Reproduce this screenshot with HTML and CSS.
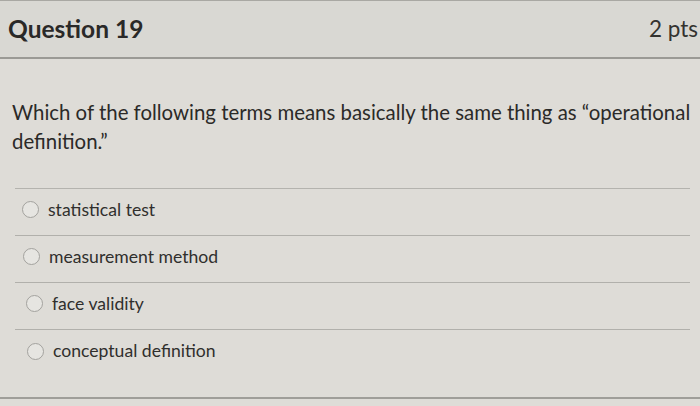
FILE: index.html
```html
<!DOCTYPE html>
<html lang="en">
<head>
<meta charset="utf-8">
<title>Question 19</title>
<link rel="stylesheet" href="styles.css">
</head>
<body>
<div class="quiz">
  <div class="header">
    <h2 class="title">Question 19</h2>
    <span class="points">2 pts</span>
  </div>
  <div class="content">
    <p class="question-text">Which of the following terms means basically the same thing as “operational<br>definition.”</p>
    <div class="answers">
      <label class="answer a1"><span class="radio"></span><span class="label">statistical test</span></label>
      <label class="answer a2"><span class="radio"></span><span class="label">measurement method</span></label>
      <label class="answer a3"><span class="radio"></span><span class="label">face validity</span></label>
      <label class="answer a4"><span class="radio"></span><span class="label">conceptual definition</span></label>
    </div>
  </div>
  <div class="footer"></div>
</div>
</body>
</html>
```
FILE: styles.css
```css
html, body {
  margin: 0;
  padding: 0;
}
body {
  width: 700px;
  height: 406px;
  overflow: hidden;
  background: #dedcd7;
  font-family: Lato, "Open Sans", sans-serif;
  color: #2e2d2b;
}
.quiz {
  display: flex;
  flex-direction: column;
}
.header {
  height: 56px;
  border-top: 1px solid #a9a8a3;
  border-bottom: 2px solid #9b9a95;
  background: #d9d8d3;
  display: flex;
  align-items: center;
  justify-content: space-between;
  padding: 0 2px 0 8px;
}
.title {
  margin: 0 0 2px 0;
  font-size: 24.5px;
  font-weight: 700;
  color: #2a2928;
}
.points {
  font-size: 22.5px;
  font-weight: 400;
  color: #33322f;
  margin-bottom: 2px;
}
.content {
  padding: 0 10px 0 12px;
}
.question-text {
  margin: 39px -8px 0 0;
  font-size: 20.4px;
  line-height: 29px;
  color: #2b2a28;
}
.answers {
  margin: 32px 0 0 3px;
  border-top: 1px solid #b4b3ae;
  display: flex;
  flex-direction: column;
}
.answer {
  box-sizing: border-box;
  height: 47px;
  padding-bottom: 5px;
  border-bottom: 1px solid #b1b0ab;
  display: flex;
  align-items: center;
  gap: 9px;
  padding-left: 7px;
  font-size: 17.6px;
  color: #302f2d;
}
.a2 { padding-left: 8px; }
.a3 { padding-left: 11px; }
.a4 { padding-left: 12px; border-bottom: none; }
.radio {
  width: 15px;
  height: 15px;
  border-radius: 50%;
  border: 1.5px solid #a3a29e;
  background: #e6e5e1;
  flex: none;
}
.label {
  line-height: 20px;
}
.footer {
  margin-top: 20px;
  border-top: 2px solid #9f9e99;
  height: 9px;
}
```
